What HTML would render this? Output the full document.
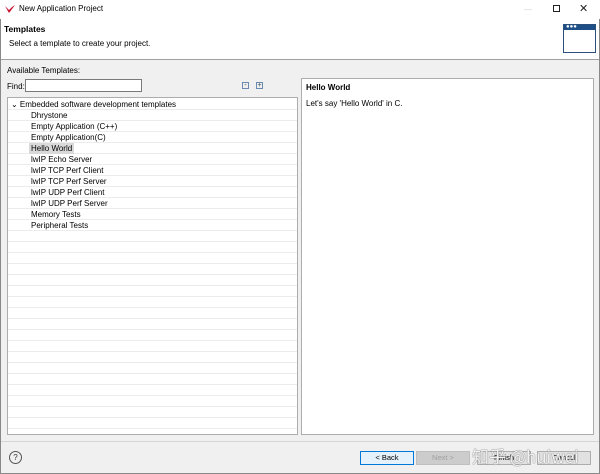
<!DOCTYPE html>
<html><head><style>
*{margin:0;padding:0;box-sizing:border-box}
body{width:600px;height:474px;overflow:hidden;background:#f0f0f0;font-family:"Segoe UI","Liberation Sans",sans-serif;font-size:8px;color:#000;position:relative}
.a{position:absolute}
.win{left:0;top:0;width:600px;height:474px;border:1px solid #888;border-top:none}
.title{left:0;top:0;width:600px;height:19px;background:#fff}
.hdr{left:1px;top:19px;width:598px;height:41px;background:#fff;border-bottom:1px solid #a0a0a0}
.tree{left:7px;top:97px;width:291px;height:338px;background:#fff;border:1px solid #adadad;
background-image:repeating-linear-gradient(to bottom,transparent 0,transparent 10px,#ececec 10px,#ececec 11px);background-position:0 1px}
.right{left:301px;top:78px;width:293px;height:357px;background:#fff;border:1px solid #adadad}
.row{position:absolute;left:31px;height:11px;line-height:11px;font-size:8px}
.btn{position:absolute;top:451px;height:14px;width:54px;border:1px solid #adadad;background:#e1e1e1;text-align:center;line-height:12px;font-size:7.5px}
</style></head><body>
<div class="a win"></div>
<div class="a title"></div>
<svg class="a" style="left:5px;top:4px" width="11" height="10"><path d="M0 2 L4 9 L10 1 L7 3 L4 6 Z" fill="#c8102e"/></svg>
<div class="a" style="left:19px;top:4px;font-size:8px">New Application Project</div>
<div class="a" style="left:524px;top:9px;width:8px;height:1px;background:#e6e6e6"></div>
<div class="a" style="left:553px;top:5px;width:7px;height:7px;border:1px solid #222"></div>
<div class="a" style="left:579px;top:2px;font-size:11px;color:#222">✕</div>
<div class="a hdr"></div>
<div class="a" style="left:4px;top:24px;font-weight:bold;font-size:8.5px">Templates</div>
<div class="a" style="left:9px;top:39px;font-size:8px">Select a template to create your project.</div>
<div class="a" style="left:563px;top:24px;width:33px;height:29px;border:1px solid #2a4f7a;background:#fff"><div style="height:5px;background:#1d4e86;color:#fff;font-size:6px;line-height:4px;padding-left:2px">●●●</div></div>
<div class="a" style="left:7px;top:66px;font-size:8px">Available Templates:</div>
<div class="a" style="left:7px;top:82px;font-size:8px">Find:</div>
<div class="a" style="left:25px;top:79px;width:117px;height:13px;background:#fff;border:1px solid #7a7a7a"></div>
<div class="a" style="left:242px;top:82px;width:7px;height:7px;border:1px solid #6a8ab0;font-size:7px;line-height:5px;text-align:center;color:#345">-</div>
<div class="a" style="left:256px;top:82px;width:7px;height:7px;border:1px solid #6a8ab0;font-size:7px;line-height:5px;text-align:center;color:#345">+</div>
<div class="a tree"></div>
<div class="row" style="left:11px;top:99px">⌄ Embedded software development templates</div>
<div class="row" style="top:110px">Dhrystone</div>
<div class="row" style="top:121px">Empty Application (C++)</div>
<div class="row" style="top:132px">Empty Application(C)</div>
<div class="row" style="top:143px;left:29px;padding:0 2px;background:#d9d9d9">Hello World</div>
<div class="row" style="top:154px">lwIP Echo Server</div>
<div class="row" style="top:165px">lwIP TCP Perf Client</div>
<div class="row" style="top:176px">lwIP TCP Perf Server</div>
<div class="row" style="top:187px">lwIP UDP Perf Client</div>
<div class="row" style="top:198px">lwIP UDP Perf Server</div>
<div class="row" style="top:209px">Memory Tests</div>
<div class="row" style="top:220px">Peripheral Tests</div>
<div class="a right"></div>
<div class="a" style="left:306px;top:83px;font-weight:bold;font-size:8px">Hello World</div>
<div class="a" style="left:306px;top:99px;font-size:8px">Let's say 'Hello World' in C.</div>
<div class="a" style="left:1px;top:441px;width:598px;height:1px;background:#d5d5d5"></div>
<div class="a" style="left:9px;top:451px;width:13px;height:13px;border:1px solid #555;border-radius:50%;text-align:center;line-height:11px;font-size:8px;color:#333">?</div>
<div class="btn" style="left:360px;border-color:#0078d7;background:#e5f1fb">&lt; Back</div>
<div class="btn" style="left:416px;color:#a0a0a0;background:#cccccc;border-color:#bfbfbf">Next &gt;</div>
<div class="btn" style="left:477px">Finish</div>
<div class="btn" style="left:537px">Cancel</div>
<div class="a" style="left:472px;top:443px;font-family:'Noto Sans CJK SC',sans-serif;font-size:17px;color:rgba(255,255,255,0.9);text-shadow:0 0 1px #777,0 0 1px #777">知乎 @huiwei</div>
</body></html>
